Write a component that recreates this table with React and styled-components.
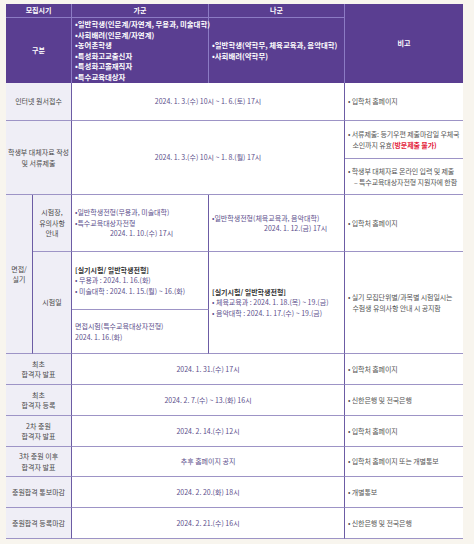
import React from "react";
import styled, { createGlobalStyle } from "styled-components";

const Global = createGlobalStyle`
  html, body { margin: 0; padding: 0; background: #f8f5ee; }
  body { font-family: "Noto Sans CJK KR", "Noto Sans", sans-serif; }
`;

const Page = styled.div`
  padding: 4px 11px 5px 6px;
  width: 457px;
`;

const Table = styled.table`
  width: 457px;
  border-collapse: separate;
  border-spacing: 0;
  table-layout: fixed;
  font-size: 7px;
  line-height: 10.5px;
`;

const cellBase = `
  box-sizing: border-box;
  padding: 0;
  vertical-align: middle;
`;

const Head = styled.th`
  ${cellBase}
  height: ${(p) => p.$h}px;
  background: #5a3e91;
  color: #fff;
  font-weight: 700;
  font-size: ${(p) => (p.$left ? "7.4px" : "7px")};
  text-align: ${(p) => (p.$left ? "left" : "center")};
  padding-left: ${(p) => (p.$left ? "3px" : "0")};
  border-right: ${(p) => (p.$last ? "none" : "1px solid #8c7bc4")};
  border-bottom: ${(p) => (p.$bottom ? "1px solid #8c7bc4" : "none")};
`;

const Label = styled.td`
  ${cellBase}
  height: ${(p) => p.$h}px;
  background: #efeef6;
  color: #4a4a4a;
  text-align: center;
  border-right: 1px solid #6c5ca4;
  border-bottom: 1px solid #9d94c6;
`;

const DateCell = styled.td`
  ${cellBase}
  height: ${(p) => p.$h}px;
  background: #fff;
  color: #5d4f8c;
  text-align: center;
  border-right: 1px solid #6c5ca4;
  border-bottom: 1px solid #9d94c6;
`;

const Content = styled.td`
  ${cellBase}
  height: ${(p) => p.$h}px;
  background: #fff;
  color: #5d4f8c;
  text-align: left;
  padding-left: 3px;
  border-right: 1px solid #6c5ca4;
  border-bottom: 1px solid #9d94c6;
`;

const Note = styled.td`
  ${cellBase}
  height: ${(p) => p.$h}px;
  background: #fff;
  color: #555;
  text-align: left;
  padding-left: 3px;
  letter-spacing: -0.1px;
  border-bottom: 1px solid #9d94c6;
`;

const Line = styled.div`
  white-space: nowrap;
  text-align: ${(p) => (p.$center ? "center" : "left")};
  font-weight: ${(p) => (p.$bold ? 700 : "inherit")};
  color: ${(p) => (p.$dark ? "#333" : "inherit")};
  padding-left: ${(p) => (p.$indent ? p.$indent : 0)}px;
`;

const Item = styled.div`
  white-space: nowrap;
`;

const Red = styled.span`
  color: #e3223a;
  font-weight: 700;
`;

const simpleRows = [
  { label: ["최초", "합격자 발표"], date: "2024. 1. 31.(수) 17시", note: "입학처 홈페이지", h: 31 },
  { label: ["최초", "합격자 등록"], date: "2024. 2. 7.(수) ~ 13.(화) 16시", note: "신한은행 및 전국은행", h: 31 },
  { label: ["2차 충원", "합격자 발표"], date: "2024. 2. 14.(수) 12시", note: "입학처 홈페이지", h: 31 },
  { label: ["3차 충원 이후", "합격자 발표"], date: "추후 홈페이지 공지", note: "입학처 홈페이지 또는 개별통보", h: 30 },
  { label: ["충원합격 통보마감"], date: "2024. 2. 20.(화) 18시", note: "개별통보", h: 31 },
  { label: ["충원합격 등록마감"], date: "2024. 2. 21.(수) 16시", note: "신한은행 및 전국은행", h: 31 },
];

export default function App() {
  return (
    <Page>
      <Global />
      <Table>
        <colgroup>
          <col style={{ width: 27 }} />
          <col style={{ width: 39 }} />
          <col style={{ width: 137 }} />
          <col style={{ width: 136 }} />
          <col style={{ width: 118 }} />
        </colgroup>
        <thead>
          <tr>
            <Head colSpan={2} $h={14} $bottom>모집시기</Head>
            <Head $h={14} $bottom>가군</Head>
            <Head $h={14} $bottom>나군</Head>
            <Head rowSpan={2} $h={14} $last>비고</Head>
          </tr>
          <tr>
            <Head colSpan={2} $h={65}>구분</Head>
            <Head $h={65} $left>
              <Line>•일반학생(인문계/자연계, 무용과, 미술대학)</Line>
              <Line>•사회배려(인문계/자연계)</Line>
              <Line>•농어촌학생</Line>
              <Line>•특성화고교출신자</Line>
              <Line>•특성화고졸재직자</Line>
              <Line>•특수교육대상자</Line>
            </Head>
            <Head $h={65} $left>
              <Line>•일반학생(약학부, 체육교육과, 음악대학)</Line>
              <Line>•사회배려(약학부)</Line>
            </Head>
          </tr>
        </thead>
        <tbody>
          <tr>
            <Label colSpan={2} $h={38}>인터넷 원서접수</Label>
            <DateCell colSpan={2} $h={38}>2024. 1. 3.(수) 10시 ~ 1. 6.(토) 17시</DateCell>
            <Note $h={38}><Item>• 입학처 홈페이지</Item></Note>
          </tr>
          <tr>
            <Label colSpan={2} rowSpan={2} $h={38}>
              <Line $center>학생부 대체자료 작성</Line>
              <Line $center>및 서류제출</Line>
            </Label>
            <DateCell colSpan={2} rowSpan={2} $h={38}>2024. 1. 3.(수) 10시 ~ 1. 8.(월) 17시</DateCell>
            <Note $h={38}>
              <Item>• 서류제출: 등기우편 제출마감일 우체국</Item>
              <Item>&nbsp;&nbsp;&nbsp;소인까지 유효<Red>(방문제출 불가)</Red></Item>
            </Note>
          </tr>
          <tr>
            <Note $h={36}>
              <Item>• 학생부 대체자료 온라인 입력 및 제출</Item>
              <Item>&nbsp;&nbsp;&nbsp;&nbsp;– 특수교육대상자전형 지원자에 한함</Item>
            </Note>
          </tr>
          <tr>
            <Label rowSpan={3} $h={57}>
              <Line $center>면접/</Line>
              <Line $center>실기</Line>
            </Label>
            <Label $h={57}>
              <Line $center>시험장,</Line>
              <Line $center>유의사항</Line>
              <Line $center>안내</Line>
            </Label>
            <Content $h={57}>
              <Line>•일반학생전형(무용과, 미술대학)</Line>
              <Line>•특수교육대상자전형</Line>
              <Line $center>2024. 1. 10.(수) 17시</Line>
            </Content>
            <Content $h={57}>
              <Line>•일반학생전형(체육교육과, 음악대학)</Line>
              <Line $indent={52}>2024. 1. 12.(금) 17시</Line>
            </Content>
            <Note $h={57}><Item>• 입학처 홈페이지</Item></Note>
          </tr>
          <tr>
            <Label rowSpan={2} $h={58}>시험일</Label>
            <Content $h={58}>
              <Line $bold $dark>[실기시험/ 일반학생전형]</Line>
              <Line>• 무용과 : 2024. 1. 16.(화)</Line>
              <Line>• 미술대학 : 2024. 1. 15.(월) ~ 16.(화)</Line>
            </Content>
            <Content rowSpan={2} $h={58}>
              <Line $bold $dark>[실기시험/ 일반학생전형]</Line>
              <Line>• 체육교육과 : 2024. 1. 18.(목) ~ 19.(금)</Line>
              <Line>• 음악대학 : 2024. 1. 17.(수) ~ 19.(금)</Line>
            </Content>
            <Note rowSpan={2} $h={58}>
              <Item>• 실기 모집단위별/과목별 시험일시는</Item>
              <Item>&nbsp;&nbsp;&nbsp;수험생 유의사항 안내 시 공지함</Item>
            </Note>
          </tr>
          <tr>
            <Content $h={44}>
              <Line>면접시험(특수교육대상자전형)</Line>
              <Line>2024. 1. 16.(화)</Line>
            </Content>
          </tr>
          {simpleRows.map((r) => (
            <tr key={r.date + r.note}>
              <Label colSpan={2} $h={r.h}>
                {r.label.map((l) => (
                  <Line $center key={l}>{l}</Line>
                ))}
              </Label>
              <DateCell colSpan={2} $h={r.h}>{r.date}</DateCell>
              <Note $h={r.h}><Item>• {r.note}</Item></Note>
            </tr>
          ))}
        </tbody>
      </Table>
    </Page>
  );
}
